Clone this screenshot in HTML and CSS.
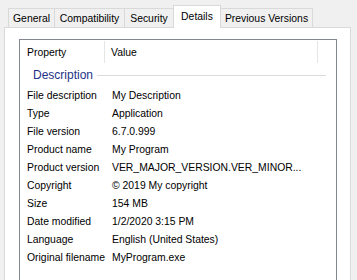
FILE: index.html
```html
<!DOCTYPE html>
<html>
<head>
<meta charset="utf-8">
<link rel="stylesheet" href="styles.css">
</head>
<body>
<div class="window">
  <div class="tabs">
    <div class="tab t-general">General</div>
    <div class="tab t-compat">Compatibility</div>
    <div class="tab t-security">Security</div>
    <div class="tab t-details selected">Details</div>
    <div class="tab t-prev">Previous Versions</div>
  </div>
  <div class="panel">
    <div class="list">
      <div class="header">
        <div class="hcol hcol1">Property</div>
        <div class="hcol hcol2">Value</div>
        <div class="hcol hcol3"></div>
      </div>
      <div class="group">
        <span class="group-title">Description</span>
        <span class="group-line"></span>
      </div>
      <div class="rows">
        <div class="row"><span class="label">File description</span><span class="value">My Description</span></div>
        <div class="row"><span class="label">Type</span><span class="value">Application</span></div>
        <div class="row"><span class="label">File version</span><span class="value">6.7.0.999</span></div>
        <div class="row"><span class="label">Product name</span><span class="value">My Program</span></div>
        <div class="row"><span class="label">Product version</span><span class="value">VER_MAJOR_VERSION.VER_MINOR...</span></div>
        <div class="row"><span class="label">Copyright</span><span class="value">© 2019 My copyright</span></div>
        <div class="row"><span class="label">Size</span><span class="value">154 MB</span></div>
        <div class="row"><span class="label">Date modified</span><span class="value">1/2/2020 3:15 PM</span></div>
        <div class="row"><span class="label">Language</span><span class="value">English (United States)</span></div>
        <div class="row"><span class="label">Original filename</span><span class="value">MyProgram.exe</span></div>
      </div>
    </div>
  </div>
</div>
</body>
</html>
```

FILE: styles.css
```css
html, body {
  margin: 0;
  padding: 0;
  background: #f0f0f0;
  width: 357px;
  height: 280px;
  overflow: hidden;
}

body {
  font-family: "Liberation Sans", Arial, sans-serif;
  font-size: 10.4px;
  color: #000;
}

.window {
  padding: 5px 0 0 4px;
}

.tabs {
  display: flex;
  align-items: flex-end;
  height: 22px;
  padding-left: 4px;
  position: relative;
  z-index: 2;
}

.tab {
  height: 19px;
  box-sizing: border-box;
  border: 1px solid #d9d9d9;
  border-bottom: none;
  background: #f0f0f0;
  display: flex;
  align-items: center;
  justify-content: center;
  margin-left: -1px;
}

.tab:first-child {
  margin-left: 0;
}

.t-general { width: 47px; }
.t-compat { width: 71px; }
.t-security { width: 50px; }
.t-details { width: 48px; }
.t-prev { width: 93px; }

.tab.selected {
  height: 23px;
  margin-bottom: -1px;
  background: #fff;
  padding-bottom: 2px;
}

.panel {
  width: 347px;
  height: 253px;
  box-sizing: border-box;
  border: 1px solid #d9d9d9;
  border-bottom: none;
  background: #fff;
  padding: 11px 13px 0 14px;
  display: flex;
  flex-direction: column;
}

.list {
  flex: 1;
  border: 1px solid #828790;
  border-bottom: none;
  background: #fff;
  overflow: hidden;
}

.header {
  display: flex;
  height: 24px;
}

.hcol {
  display: flex;
  align-items: center;
  box-sizing: border-box;
  margin: 1px 0;
}

.hcol1 {
  width: 85px;
  padding-left: 7px;
  border-right: 1px solid #e5e5e5;
}

.hcol2 {
  width: 213px;
  padding-left: 6px;
  border-right: 1px solid #e5e5e5;
}

.hcol3 {
  flex: 1;
}

.group {
  display: flex;
  align-items: center;
  height: 22px;
  padding-left: 13px;
  padding-right: 10px;
}

.group-title {
  color: #1e3287;
  font-size: 12px;
  margin-right: 4px;
}

.group-line {
  flex: 1;
  height: 1px;
  background: #dcdcdc;
}

.rows {
  display: flex;
  flex-direction: column;
}

.row {
  display: flex;
  align-items: center;
  height: 18px;
}

.label {
  width: 86px;
  padding-left: 7px;
  box-sizing: border-box;
  white-space: nowrap;
}

.value {
  padding-left: 6px;
  white-space: nowrap;
}
```
